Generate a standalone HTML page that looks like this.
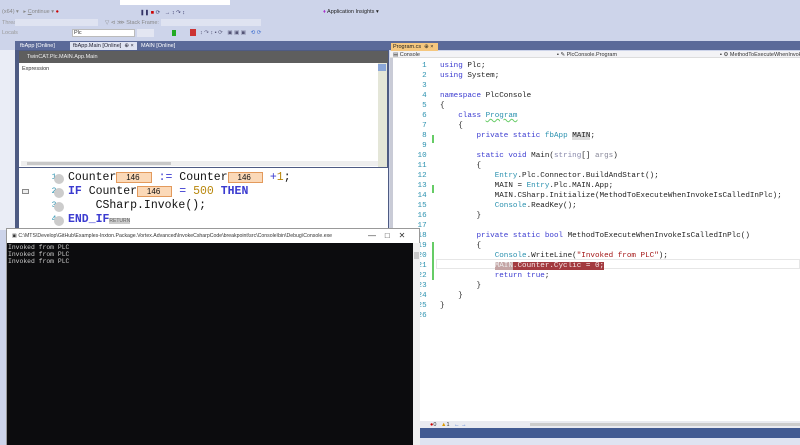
<!DOCTYPE html>
<html><head><meta charset="utf-8"><style>
*{margin:0;padding:0;box-sizing:border-box}
body{width:800px;height:445px;overflow:hidden;background:#cdd4ea;font-family:"Liberation Sans",sans-serif;position:relative}
.a{position:absolute}
.t{font-size:5.5px;color:#333;white-space:nowrap}
.mono{font-family:"Liberation Mono",monospace;white-space:pre}
.rc{font-size:7.6px;line-height:10px;color:#222}
.kw{color:#3b3bd0}.ty{color:#2b91af}.st{color:#a31515}.ln{color:#2b91af}
</style></head><body>
<!-- toolbar -->
<div class="a t" style="left:2px;top:9px;color:#888">(x64) ▾ &nbsp; ▸ <u>C</u>ontinue ▾ <span style="color:#c00">●</span></div>
<div class="a" style="left:120px;top:0;width:110px;height:5px;background:#fff"></div>
<div class="a t" style="left:140px;top:10px;color:#336">❚❚ <span style="color:#c00">■</span> ⟳ &nbsp; → ↕ ↷ ↕</div>
<div class="a t" style="left:323px;top:9px;color:#222"><span style="color:#a3c">♦</span> Application Insights ▾</div>
<div class="a t" style="left:2px;top:20px;color:#999">Thread:</div>
<div class="a" style="left:15px;top:19px;width:83px;height:7px;background:#dfe3f1"></div>
<div class="a t" style="left:105px;top:20px;color:#888">▽ ⊲ ⋙ Stack Frame:</div>
<div class="a" style="left:161px;top:19px;width:100px;height:7px;background:#dfe3f1"></div>
<div class="a t" style="left:2px;top:30px;color:#999">Locals</div>
<div class="a" style="left:72px;top:29px;width:63px;height:8px;background:#fff;border:1px solid #bbb"></div>
<div class="a t" style="left:74px;top:30px">Plc</div>
<div class="a" style="left:137px;top:29px;width:17px;height:8px;background:#e3e6f2"></div>
<div class="a" style="left:172px;top:30px;width:4px;height:6px;background:#2a2"></div>
<div class="a" style="left:190px;top:29px;width:6px;height:7px;background:#c33"></div>
<div class="a t" style="left:200px;top:30px;color:#557">↕ ↷ ↕ ▪ ⟳ &nbsp; ▣ ▣ ▣ &nbsp; <span style="color:#36c">⟲ ⟳</span></div>
<!-- tab strip -->
<div class="a" style="left:0;top:41px;width:800px;height:9px;background:#5b6a99"></div>
<div class="a" style="left:0;top:41px;width:15px;height:9px;background:#cdd4ea"></div>
<div class="a t" style="left:20px;top:43px;color:#fff">fbApp [Online]</div>
<div class="a" style="left:70px;top:42px;width:67px;height:9px;background:#dfe3f1"></div>
<div class="a t" style="left:73px;top:43px;color:#223">fbApp.Main [Online] &nbsp;⊕ ×</div>
<div class="a t" style="left:141px;top:43px;color:#fff">MAIN [Online]</div>
<div class="a" style="left:390px;top:42px;width:390px;height:8px;background:#5b6a99"></div>
<div class="a" style="left:391px;top:43px;width:47px;height:8px;background:#f5c77e"></div>
<div class="a t" style="left:393px;top:44px;color:#222">Program.cs &nbsp;⊕ ×</div>
<!-- left gutter -->
<div class="a" style="left:0;top:50px;width:16px;height:180px;background:#eaedf6"></div>
<!-- left doc -->
<div class="a" style="left:15px;top:50px;width:374px;height:180px;background:#4e5b83"></div>
<div class="a" style="left:19px;top:51px;width:369px;height:12px;background:#5e5e5e"></div>
<div class="a t" style="left:27px;top:54px;color:#eee">TwinCAT.Plc.MAIN.App.Main</div>
<div class="a" style="left:19px;top:63px;width:359px;height:104px;background:#fff"></div>
<div class="a t" style="left:22px;top:66px">Expression</div>
<div class="a" style="left:378px;top:63px;width:9px;height:104px;background:#e4e6d8"></div>
<div class="a" style="left:378px;top:64px;width:8px;height:7px;background:#8aa6d8"></div>
<div class="a" style="left:21px;top:161px;width:357px;height:5px;background:#eee"></div>
<div class="a" style="left:27px;top:162px;width:144px;height:3px;background:#c8c8c8"></div>
<div class="a" style="left:19px;top:168px;width:369px;height:62px;background:#fff"></div>
<div class="a" style="left:19px;top:168px;width:44px;height:62px;background:#fff"></div>
<div class="a" style="left:22px;top:189px;width:7px;height:5px;border:1px solid #888;background:#eee"></div>
<div class="a mono" style="left:42px;top:171px;font-size:8px;line-height:14px;color:#2b91af">  1
  2
  3
  4</div>
<div class="a" style="left:54px;top:174px;width:10px;height:10px;border-radius:5px;background:#ccc"></div>
<div class="a" style="left:54px;top:188px;width:10px;height:10px;border-radius:5px;background:#ccc"></div>
<div class="a" style="left:54px;top:202px;width:10px;height:10px;border-radius:5px;background:#ccc"></div>
<div class="a" style="left:54px;top:216px;width:10px;height:10px;border-radius:5px;background:#ccc"></div>
<div class="a mono" style="left:68px;top:171px;font-size:11.5px;line-height:14px;color:#111">Counter<span style="background:#fbd9b8;border:1px solid #e39a5c;font-size:8px;font-family:'Liberation Sans'">    146     </span> <span class="kw">:=</span> Counter<span style="background:#fbd9b8;border:1px solid #e39a5c;font-size:8px;font-family:'Liberation Sans'">    146     </span> <span class="kw">+</span><span style="color:#b8860b">1</span>;
<b class="kw">IF</b> Counter<span style="background:#fbd9b8;border:1px solid #e39a5c;font-size:8px;font-family:'Liberation Sans'">    146     </span> <span class="kw">=</span> <span style="color:#b8860b">500</span> <b class="kw">THEN</b>
    CSharp.Invoke();
<b class="kw">END_IF</b><span style="font-size:5px;background:#ccc;color:#666;font-family:'Liberation Sans'">RETURN</span></div>
<!-- right editor -->
<div class="a" style="left:390px;top:51px;width:410px;height:370px;background:#fff"></div>
<div class="a" style="left:390px;top:51px;width:410px;height:7px;background:#f3f3f6;border-bottom:1px solid #ddd"></div>
<div class="a t" style="left:393px;top:52px">▤ Console</div>
<div class="a t" style="left:557px;top:52px">▪ ✎ PlcConsole.Program</div>
<div class="a t" style="left:720px;top:52px">▪ ⚙ MethodToExecuteWhenInvokeIs</div>
<div class="a" style="left:390px;top:58px;width:3px;height:370px;background:#c9cbd6"></div>
<div class="a" style="left:432px;top:135px;width:2px;height:8px;background:#6c6"></div>
<div class="a" style="left:432px;top:185px;width:2px;height:8px;background:#6c6"></div>
<div class="a" style="left:432px;top:242px;width:2px;height:38px;background:#6c6"></div>
<div class="a mono rc ln" style="left:413px;top:61px;text-align:right">  1
  2
  3
  4
  5
  6
  7
  8
  9
 10
 11
 12
 13
 14
 15
 16
 17
 18
 19
 20
 21
 22
 23
 24
 25
 26</div>
<div class="a" style="left:436px;top:259px;width:364px;height:10px;border:1px solid #e6e6e6"></div>
<div class="a mono rc" style="left:440px;top:61px"><span class="kw">using</span> Plc;
<span class="kw">using</span> System;

<span class="kw">namespace</span> PlcConsole
{
    <span class="kw">class</span> <span class="ty" style="text-decoration:underline wavy #6c6">Program</span>
    {
        <span class="kw">private static</span> <span class="ty">fbApp</span> <span style="background:#ddd">MAIN</span>;

        <span class="kw">static void</span> Main(<span class="kw" style="color:#88a">string</span>[] <span style="color:#889">args</span>)
        {
            <span class="ty">Entry</span>.Plc.Connector.BuildAndStart();
            MAIN = <span class="ty">Entry</span>.Plc.MAIN.App;
            MAIN.CSharp.Initialize(MethodToExecuteWhenInvokeIsCalledInPlc);
            <span class="ty">Console</span>.ReadKey();
        }

        <span class="kw">private static bool</span> MethodToExecuteWhenInvokeIsCalledInPlc()
        {
            <span class="ty">Console</span>.WriteLine(<span class="st">"Invoked from PLC"</span>);
            <span style="background:#c4a4a4;color:#eee">MAIN</span><span style="background:#a33a3f;color:#f6e6e6">.Counter.Cyclic = 0;</span>
            <span class="kw">return true</span>;
        }
    }
}</div>
<div class="a" style="left:420px;top:421px;width:380px;height:7px;background:#e9eaf0"></div>
<div class="a t" style="left:430px;top:422px"><span style="color:#c00">●</span>0 &nbsp; <span style="color:#d90">▲</span>1 &nbsp; <span style="color:#36c">← →</span></div>
<div class="a" style="left:530px;top:423px;width:270px;height:3px;background:#ccc"></div>
<div class="a" style="left:420px;top:428px;width:380px;height:10px;background:#425a92"></div>
<div class="a" style="left:420px;top:438px;width:380px;height:7px;background:#dfe3f1"></div>
<!-- console -->
<div class="a" style="left:6px;top:228px;width:414px;height:217px;background:#fff;border:1px solid #999"></div>
<div class="a t" style="left:12px;top:233px;font-size:5.2px">▣ C:\MTS\Develop\GitHub\Examples-Inxton.Package.Vortex.Advanced\InvokeCsharpCode\breakpoint\src\Console\bin\Debug\Console.exe</div>
<div class="a t" style="left:368px;top:231px;font-size:8px;color:#333">—&nbsp;&nbsp;&nbsp;&nbsp;□&nbsp;&nbsp;&nbsp;&nbsp;✕</div>
<div class="a" style="left:7px;top:243px;width:406px;height:202px;background:#0c0c0e"></div>
<div class="a" style="left:413px;top:243px;width:7px;height:202px;background:#f0f0f0"></div>
<div class="a" style="left:414px;top:252px;width:5px;height:7px;background:#c8c8c8"></div>
<div class="a mono" style="left:8px;top:244px;font-size:6.4px;line-height:7px;color:#ccc">Invoked from PLC
Invoked from PLC
Invoked from PLC</div>
</body></html>
